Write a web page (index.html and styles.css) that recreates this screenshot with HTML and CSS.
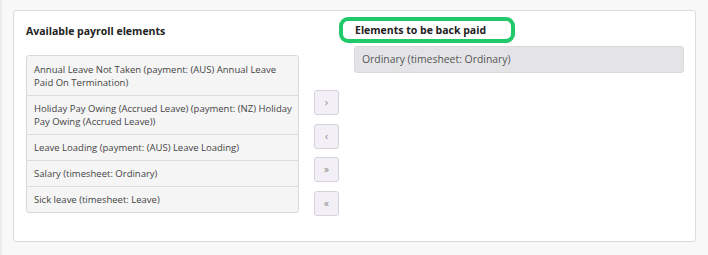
FILE: index.html
```html
<!DOCTYPE html>
<html lang="en">
<head>
  <meta charset="UTF-8" />
  <title>Back pay elements</title>
  <link rel="stylesheet" href="styles.css">
</head>
<body>
  <div class="page">
    <div class="card">
      <div class="column left-col">
        <div class="col-title">Available payroll elements</div>
        <div class="element-list">
          <div class="element-item">Annual Leave Not Taken (payment: (AUS) Annual Leave Paid On Termination)</div>
          <div class="element-item">Holiday Pay Owing (Accrued Leave) (payment: (NZ) Holiday Pay Owing (Accrued Leave))</div>
          <div class="element-item">Leave Loading (payment: (AUS) Leave Loading)</div>
          <div class="element-item">Salary (timesheet: Ordinary)</div>
          <div class="element-item">Sick leave (timesheet: Leave)</div>
        </div>
      </div>

      <div class="move-buttons">
        <div class="move-btn">&rsaquo;</div>
        <div class="move-btn">&lsaquo;</div>
        <div class="move-btn">&raquo;</div>
        <div class="move-btn">&laquo;</div>
      </div>

      <div class="column right-col">
        <div class="col-title highlighted">Elements to be back paid</div>
        <div class="selected-list">
          <div class="selected-item">Ordinary (timesheet: Ordinary)</div>
        </div>
      </div>
    </div>
  </div>
</body>
</html>
```

FILE: styles.css
```css
body {
  margin: 0;
  font-family: "Open Sans", "Noto Sans", sans-serif;
  background-color: #f8f8f8;
}
.page {
  border-left: 2px solid #ebebeb;
  padding: 10px 12px 0 11px;
  min-height: 255px;
  box-sizing: border-box;
}
.card {
  display: flex;
  align-items: flex-start;
  height: 232px;
  box-sizing: border-box;
  background-color: #fff;
  border: 1px solid #dcdcdc;
  border-radius: 3px;
  padding: 11px 11px 0 12px;
}
.left-col {
  width: 273px;
}
.col-title {
  font-size: 10.5px;
  font-weight: bold;
  color: #222;
  line-height: 16px;
  margin-top: 1px;
  margin-bottom: 16px;
}
.element-list {
  background-color: #f5f5f5;
  border: 1px solid #d9d9d9;
  border-radius: 3px;
}
.element-item {
  font-size: 9.5px;
  line-height: 13px;
  color: #444;
  padding: 6px 4px 6px 7px;
  border-top: 1px solid #dcdcdc;
}
.element-item:first-child {
  border-top: none;
  padding-top: 7px;
  padding-bottom: 6px;
}
.move-buttons {
  display: flex;
  flex-direction: column;
  align-items: center;
  gap: 8.5px;
  margin: 68px 15px 0 15px;
  width: 25px;
}
.move-btn {
  width: 23px;
  height: 23px;
  line-height: 22px;
  text-align: center;
  font-size: 10px;
  color: #888;
  background-color: #f3eff6;
  border: 1px solid #d7d1dc;
  border-radius: 3px;
}
.right-col {
  flex: 1;
}
.highlighted {
  width: fit-content;
  margin: -5px 0 3px -15px;
  padding: 1px 25px 1px 12px;
  border: 4px solid #22c96a;
  border-radius: 9px;
}
.selected-list {
  background-color: #e4e4e7;
  border: 1px solid #dadade;
  border-radius: 3px;
}
.selected-item {
  font-size: 10.4px;
  line-height: 13px;
  color: #555;
  padding: 6px 7px;
}
```
